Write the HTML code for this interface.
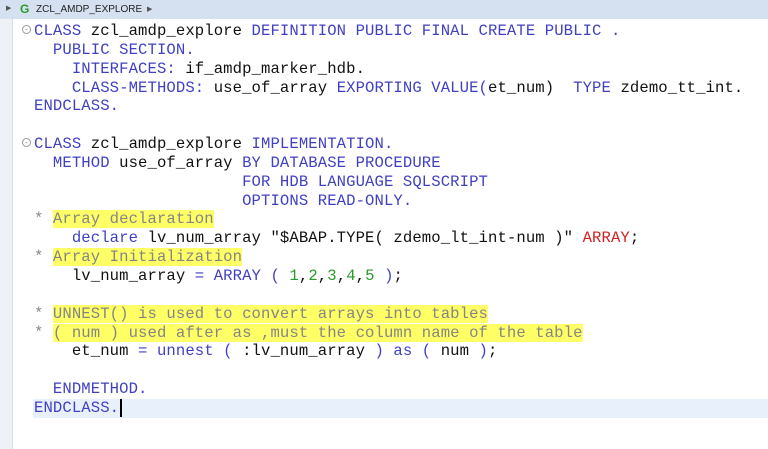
<!DOCTYPE html>
<html><head><meta charset="utf-8"><style>
html,body{margin:0;padding:0;width:768px;height:449px;overflow:hidden;background:#fff}
.hdr{position:absolute;left:0;top:0;width:768px;height:19px;background:#d5e1f1;font-family:"Liberation Sans",sans-serif;font-size:10px;color:#222}
.gut{position:absolute;left:0;top:19px;width:12px;height:430px;background:#eef1f6;border-right:1px solid #d8dde6}
.code{position:absolute;left:34px;top:22px;font-family:"Liberation Mono",monospace;font-size:15.6px;letter-spacing:0.1px;line-height:18.85px;white-space:pre;color:#111}
.k{color:#4040c4}.c{color:#858585}.n{color:#2a9a2a}.r{color:#d02020}
.h{background:#ffff66}
.cur{position:absolute;left:33px;top:399px;width:735px;height:19px;background:#e8f0fb}
.f{position:absolute;left:22px;width:7px;height:7px;border:1px solid #999;border-radius:50%;font:8px/7px 'Liberation Sans';text-align:center;color:#777}
</style></head><body>
<div class="hdr"><span style="position:absolute;left:6px;top:4px;font-size:7px;color:#555">▶</span><span style="position:absolute;left:20px;top:2px;color:#2a9a2a;font-weight:bold;font-size:12px">G</span><span style="position:absolute;left:36px;top:4px">ZCL_AMDP_EXPLORE</span><span style="position:absolute;left:147px;top:5px;font-size:7px;color:#555">▶</span></div>
<div class="gut"></div>
<div class="cur"></div>
<div class="f" style="top:25px">-</div>
<div class="f" style="top:138px">-</div>
<div class="code"><span class="k">CLASS</span> zcl_amdp_explore <span class="k">DEFINITION PUBLIC FINAL CREATE PUBLIC .</span>
  <span class="k">PUBLIC SECTION.</span>
    <span class="k">INTERFACES:</span> if_amdp_marker_hdb.
    <span class="k">CLASS-METHODS:</span> use_of_array <span class="k">EXPORTING VALUE(</span>et_num)  <span class="k">TYPE</span> zdemo_tt_int.
<span class="k">ENDCLASS.</span>

<span class="k">CLASS</span> zcl_amdp_explore <span class="k">IMPLEMENTATION.</span>
  <span class="k">METHOD</span> use_of_array <span class="k">BY DATABASE PROCEDURE</span>
                      <span class="k">FOR HDB LANGUAGE SQLSCRIPT</span>
                      <span class="k">OPTIONS READ-ONLY.</span>
<span class="c">* <span class="h">Array declaration</span></span>
    <span class="k">declare</span> lv_num_array "$ABAP.TYPE( zdemo_lt_int-num )" <span class="r">ARRAY</span>;
<span class="c">* <span class="h">Array Initialization</span></span>
    lv_num_array <span class="k">= ARRAY (</span> <span class="n">1</span>,<span class="n">2</span>,<span class="n">3</span>,<span class="n">4</span>,<span class="n">5</span> <span class="k">)</span>;

<span class="c">* <span class="h">UNNEST() is used to convert arrays into tables</span></span>
<span class="c">* <span class="h">( num ) used after as ,must the column name of the table</span></span>
    et_num <span class="k">= unnest (</span> :lv_num_array <span class="k">) as (</span> num <span class="k">)</span>;

  <span class="k">ENDMETHOD.</span>
<span class="k">ENDCLASS.</span><span style="border-left:2px solid #000;margin-left:1px"> </span></div>
</body></html>
